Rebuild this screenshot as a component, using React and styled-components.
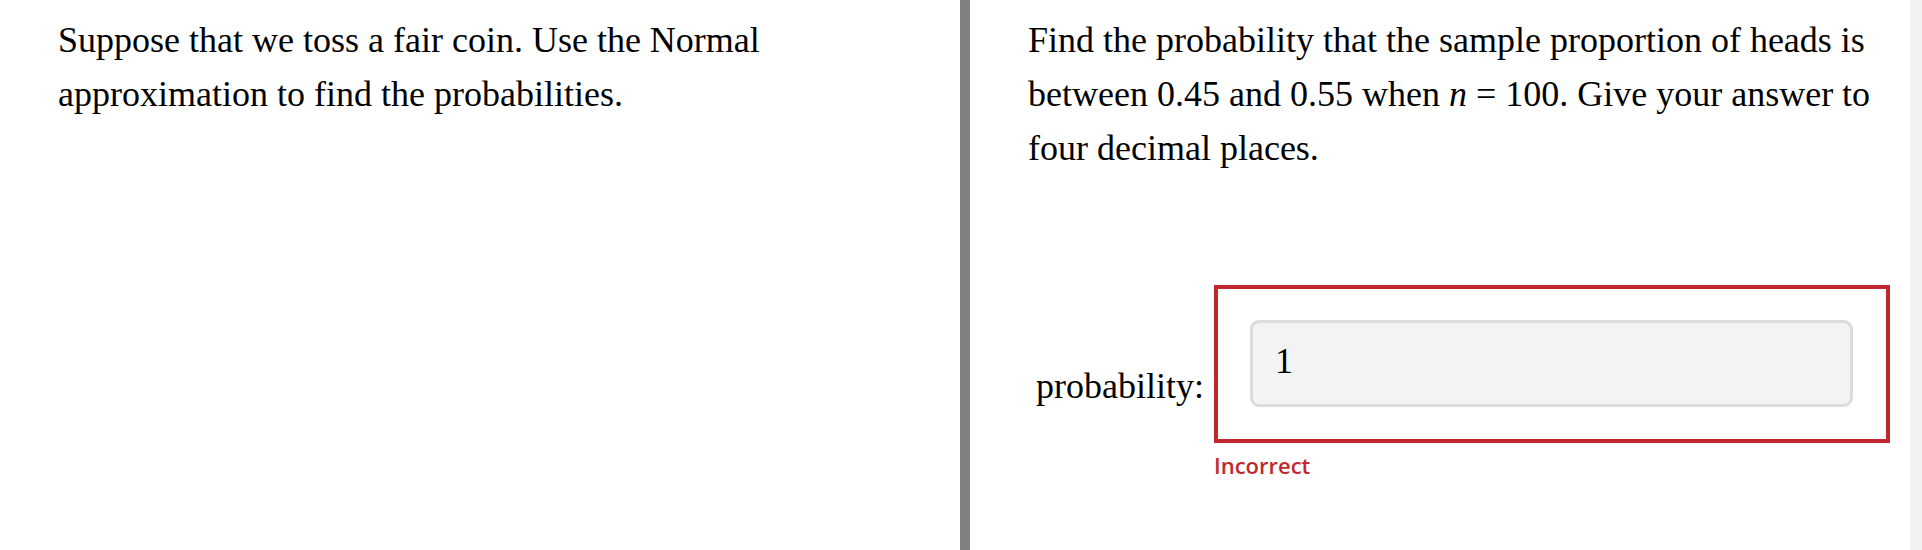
import React from "react";
import styled, { createGlobalStyle } from "styled-components";

const Global = createGlobalStyle`
  html, body { margin: 0; padding: 0; background: #ffffff; }
  body { font-family: "Liberation Serif", "Times New Roman", serif; color: #000; }
`;

const Page = styled.div`
  display: flex;
  flex-direction: row;
  height: 550px;
  width: 1922px;
  overflow: hidden;
`;

const Pane = styled.div`
  box-sizing: border-box;
  width: ${(p) => p.$width};
  flex: ${(p) => (p.$grow ? "1 1 auto" : "0 0 auto")};
  padding: 13px ${(p) => p.$right}px 0 58px;
  background: #ffffff;
`;

const Divider = styled.div`
  flex: 0 0 10px;
  background: #808080;
`;

const ScrollTrack = styled.div`
  flex: 0 0 12px;
  background: #f1f1f1;
`;

const Prose = styled.p`
  margin: 0;
  font-family: "Liberation Serif", "Times New Roman", serif;
  font-size: 36px;
  line-height: 54px;
`;

const Var = styled.i`
  font-style: italic;
`;

const AnswerRow = styled.div`
  display: flex;
  align-items: flex-start;
  gap: 10px;
  margin-top: 110px;
  padding-left: 8px;
`;

const Label = styled.span`
  margin-top: 74px;
  font-size: 36px;
  line-height: 54px;
  white-space: nowrap;
`;

const FieldColumn = styled.div`
  flex: 1 1 auto;
  display: flex;
  flex-direction: column;
`;

const ErrorBox = styled.div`
  box-sizing: border-box;
  border: 4px solid #c1272d;
  padding: 31px 33px 32px 32px;
`;

const AnswerInput = styled.input`
  box-sizing: border-box;
  display: block;
  width: 100%;
  height: 87px;
  border: 3px solid #dcdcdc;
  border-radius: 9px;
  background: #f3f3f3;
  padding: 0 0 6px 22px;
  font-family: "Liberation Serif", "Times New Roman", serif;
  font-size: 36px;
  color: #000;
  outline: none;
`;

const Feedback = styled.div`
  margin-top: 7px;
  font-family: "Open Sans", "Noto Sans", sans-serif;
  font-weight: 600;
  font-size: 22px;
  color: #c0292b;
`;

export default function App() {
  return (
    <>
      <Global />
      <Page>
        <Pane $width="960px" $right={58}>
          <Prose>
            Suppose that we toss a fair coin. Use the Normal approximation to
            find the probabilities.
          </Prose>
        </Pane>
        <Divider />
        <Pane $grow $right={20}>
          <Prose>
            Find the probability that the sample proportion of heads is between
            0.45 and 0.55 when <Var>n</Var>&nbsp;=&nbsp;100. Give your answer to
            four decimal places.
          </Prose>
          <AnswerRow>
            <Label>probability:</Label>
            <FieldColumn>
              <ErrorBox>
                <AnswerInput defaultValue="1" aria-label="probability" />
              </ErrorBox>
              <Feedback>Incorrect</Feedback>
            </FieldColumn>
          </AnswerRow>
        </Pane>
        <ScrollTrack />
      </Page>
    </>
  );
}
